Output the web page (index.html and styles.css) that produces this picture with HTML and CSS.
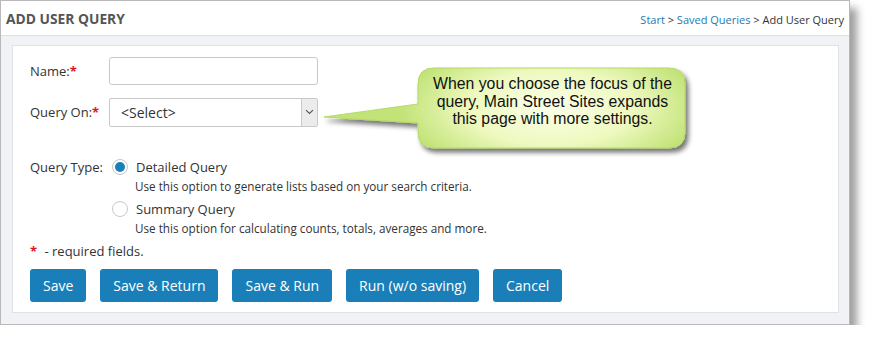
FILE: index.html
```html
<!DOCTYPE html>
<html>
<head>
<meta charset="utf-8">
<link rel="stylesheet" href="styles.css">
</head>
<body>
<div class="frame">
  <div class="header">
    <div class="title">ADD USER QUERY</div>
    <div class="crumbs"><a>Start</a> &gt; <a>Saved Queries</a> &gt; Add User Query</div>
  </div>
  <div class="body">
    <div class="panel">
      <div class="row">
        <div class="label">Name:<span class="req">*</span></div>
        <div class="input"></div>
      </div>
      <div class="row row2">
        <div class="label">Query On:<span class="req">*</span></div>
        <div class="select"><span class="sel-text">&lt;Select&gt;</span><span class="arrow"><svg width="9" height="6" viewBox="0 0 9 6"><path d="M1 1.2 L4.5 4.5 L8 1.2" fill="none" stroke="#555" stroke-width="1.1"/></svg></span></div>
      </div>
      <div class="qtype">
        <div class="qlabel">Query Type:</div>
        <div class="options">
          <div class="opt"><span class="radio checked"></span><span class="opt-text">Detailed Query</span></div>
          <div class="desc">Use this option to generate lists based on your search criteria.</div>
          <div class="opt opt2"><span class="radio"></span><span class="opt-text">Summary Query</span></div>
          <div class="desc">Use this option for calculating counts, totals, averages and more.</div>
        </div>
      </div>
      <div class="required"><span class="req">*</span> - required fields.</div>
      <div class="buttons">
        <button class="btn">Save</button>
        <button class="btn">Save &amp; Return</button>
        <button class="btn">Save &amp; Run</button>
        <button class="btn">Run (w/o saving)</button>
        <button class="btn">Cancel</button>
      </div>
    </div>
  </div>
  <div class="callout">
    <svg class="bubble" width="390" height="110" viewBox="315 60 390 110">
      <defs>
        <radialGradient id="g" cx="551" cy="108" r="150" gradientUnits="userSpaceOnUse" gradientTransform="translate(551 108) scale(1 0.45) translate(-551 -108)">
          <stop offset="0" stop-color="#fbffe8"/>
          <stop offset="0.55" stop-color="#eef9bf"/>
          <stop offset="1" stop-color="#c2e377"/>
        </radialGradient>
        <filter id="sh" x="-10%" y="-20%" width="130%" height="150%">
          <feGaussianBlur in="SourceAlpha" stdDeviation="2.5"/>
          <feOffset dx="3" dy="4" result="b"/>
          <feComponentTransfer><feFuncA type="linear" slope="0.55"/></feComponentTransfer>
          <feMerge><feMergeNode/><feMergeNode in="SourceGraphic"/></feMerge>
        </filter>
      </defs>
      <path filter="url(#sh)" fill="url(#g)" stroke="#b5da6a" stroke-width="1"
        d="M434 68 H669 Q685 68 685 84 V132 Q685 148 669 148 H434 Q418 148 418 132 V123 L324 117 L418 104 V84 Q418 68 434 68 Z"/>
    </svg>
    <div class="callout-text">When you choose the focus of the<br>query, Main Street Sites expands<br>this page with more settings.</div>
  </div>
</div>
</body>
</html>
```
FILE: styles.css
```css
html, body {
  margin: 0;
  padding: 0;
  background: #fff;
}
body {
  font-family: "Open Sans", "Noto Sans", sans-serif;
  color: #333;
  font-size: 13px;
}
.frame {
  position: relative;
  width: 848px;
  height: 323px;
  border: 1px solid #b9b9b9;
  background: #f1f2f6;
  box-shadow: 7px 8px 8px rgba(0, 0, 0, 0.38);
  display: flex;
  flex-direction: column;
}
.header {
  height: 34px;
  background: #fff;
  border-bottom: 1px solid #dedfe3;
  display: flex;
  align-items: center;
  justify-content: space-between;
  padding: 0 5px 0 5px;
}
.title {
  font-weight: bold;
  font-size: 13.8px;
  color: #555;
  padding-top: 1px;
}
.crumbs {
  font-size: 11px;
  color: #333;
  padding-top: 2px;
}
.crumbs a {
  color: #1b7ab5;
}
.body {
  flex: 1;
  padding: 9px 10px 11px 11px;
  display: flex;
}
.panel {
  flex: 1;
  background: #fff;
  border: 1px solid #e1e2e6;
  padding: 11px 0 0 17px;
}
.row {
  display: flex;
  align-items: center;
  height: 28px;
}
.row2 {
  margin-top: 13px;
}
.label {
  width: 79px;
  font-size: 13px;
}
.req {
  color: #e0141b;
  font-weight: bold;
}
.input {
  width: 207px;
  height: 26px;
  border: 1px solid #c9c9c9;
  border-radius: 3px;
  background: #fff;
}
.select {
  width: 207px;
  height: 27px;
  border: 1px solid #c9c9c9;
  border-radius: 2px;
  display: flex;
  align-items: center;
  justify-content: space-between;
  font-size: 14px;
  color: #333;
}
.sel-text {
  padding-left: 11px;
}
.arrow {
  width: 15px;
  height: 100%;
  border-left: 1px solid #c9c9c9;
  background: #ececec;
  display: flex;
  align-items: center;
  justify-content: center;
}
.qtype {
  display: flex;
  margin-top: 31px;
}
.qlabel {
  width: 82px;
  line-height: 20px;
  font-size: 13px;
}
.opt {
  display: flex;
  align-items: center;
  height: 20px;
}
.opt2 {
  margin-top: 4px;
}
.radio {
  width: 14px;
  height: 14px;
  border: 1px solid #c8c8c8;
  border-radius: 50%;
  background: #fff;
  position: relative;
  margin-right: 8px;
}
.radio.checked::after {
  content: "";
  position: absolute;
  left: 2px;
  top: 2px;
  width: 10px;
  height: 10px;
  border-radius: 50%;
  background: #1a7fbb;
}
.opt-text {
  font-size: 13px;
}
.desc {
  font-size: 11.7px;
  line-height: 18px;
  padding-left: 23px;
}
.required {
  margin-top: 4px;
  line-height: 20px;
  font-size: 13px;
}
.required .req {
  margin-right: 4px;
}
.buttons {
  display: flex;
  gap: 14px;
  margin-top: 8px;
}
.btn {
  height: 33px;
  padding: 0 13px;
  border: none;
  border-radius: 3px;
  background: #1a7fb9;
  color: #fff;
  font-family: "Open Sans", "Noto Sans", sans-serif;
  font-size: 14px;
}
.callout {
  position: absolute;
  left: 314px;
  top: 59px;
  width: 390px;
  height: 110px;
}
.bubble {
  display: block;
}
.callout-text {
  position: absolute;
  left: 104px;
  top: 15px;
  width: 267px;
  text-align: center;
  font-family: "Liberation Sans", Arial, sans-serif;
  font-size: 15.8px;
  line-height: 17.5px;
  color: #111;
}
```
